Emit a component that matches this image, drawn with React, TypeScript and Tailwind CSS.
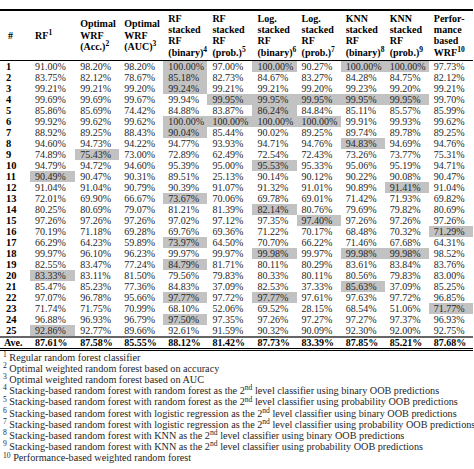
import React from "react";

// value, highlighted when the string ends with "*"
const rows: string[][] = [
  ["91.00", "98.20", "98.20", "100.00*", "97.00", "100.00*", "90.27", "100.00*", "100.00*", "97.73"],
  ["83.75", "82.12", "78.67", "85.18*", "82.73", "84.67", "83.27", "84.28", "84.75", "82.12"],
  ["99.21", "99.21", "99.20", "99.24*", "99.21", "99.21", "99.20", "99.23", "99.20", "99.21"],
  ["99.69", "99.69", "99.67", "99.94", "99.95*", "99.95*", "99.95*", "99.95*", "99.95*", "99.70"],
  ["85.86", "85.69", "74.42", "84.88", "83.87", "86.24*", "84.84", "85.11", "85.57", "85.99"],
  ["99.92", "99.62", "99.62", "100.00*", "100.00*", "100.00*", "100.00*", "99.91", "99.93", "99.62"],
  ["88.92", "89.25", "88.43", "90.04*", "85.44", "90.02", "89.25", "89.74", "89.78", "89.25"],
  ["94.60", "94.73", "94.22", "94.77", "93.93", "94.71", "94.76", "94.83*", "94.69", "94.76"],
  ["74.89", "75.43*", "73.00", "72.89", "62.49", "72.54", "72.43", "73.26", "73.77", "75.31"],
  ["94.79", "94.72", "94.60", "95.39", "95.00", "95.53*", "95.33", "95.06", "95.19", "94.71"],
  ["90.49*", "90.47", "90.31", "89.51", "25.13", "90.14", "90.12", "90.22", "90.08", "90.47"],
  ["91.04", "91.04", "90.79", "90.39", "91.07", "91.32", "91.01", "90.89", "91.41*", "91.04"],
  ["72.01", "69.90", "66.67", "73.67*", "70.06", "69.78", "69.01", "71.42", "71.93", "69.82"],
  ["80.25", "80.69", "79.07", "81.21", "81.39", "82.14*", "80.76", "79.69", "79.82", "80.69"],
  ["97.26", "97.26", "97.26", "97.02", "97.12", "97.35", "97.40*", "97.26", "97.26", "97.26"],
  ["70.19", "71.18", "69.28", "69.76", "69.36", "71.22", "70.17", "68.48", "70.32", "71.29*"],
  ["66.29", "64.23", "59.89", "73.97*", "64.50", "70.70", "66.22", "71.46", "67.68", "64.31"],
  ["99.97", "96.10", "96.23", "99.97", "99.97", "99.98*", "99.97", "99.98*", "99.98*", "98.52"],
  ["82.55", "83.47", "77.24", "84.79*", "81.71", "80.11", "80.29", "83.61", "83.84", "83.76"],
  ["83.33*", "83.11", "81.50", "79.56", "79.83", "80.33", "80.11", "80.56", "79.83", "83.00"],
  ["85.47", "85.23", "77.36", "84.83", "37.09", "82.53", "37.33", "85.63*", "37.09", "85.25"],
  ["97.07", "96.78", "95.66", "97.77*", "97.72", "97.77*", "97.61", "97.63", "97.72", "96.85"],
  ["71.74", "71.75", "70.99", "68.10", "52.06", "69.52", "28.15", "68.54", "51.06", "71.77*"],
  ["96.88", "96.93", "96.79", "97.50*", "97.35", "97.26", "97.27", "97.27", "97.37", "96.93"],
  ["92.86*", "92.77", "89.66", "92.61", "91.59", "90.32", "90.09", "92.30", "92.00", "92.75"],
];

const averages = ["87.61", "87.58", "85.55", "88.12", "81.42", "87.73", "83.39", "87.85", "85.21", "87.68"];

const headers: { lines: string[]; sup: string }[] = [
  { lines: ["RF"], sup: "1" },
  { lines: ["Optimal", "WRF", "(Acc.)"], sup: "2" },
  { lines: ["Optimal", "WRF", "(AUC)"], sup: "3" },
  { lines: ["RF", "stacked", "RF", "(binary)"], sup: "4" },
  { lines: ["RF", "stacked", "RF", "(prob.)"], sup: "5" },
  { lines: ["Log.", "stacked", "RF", "(binary)"], sup: "6" },
  { lines: ["Log.", "stacked", "RF", "(prob.)"], sup: "7" },
  { lines: ["KNN", "stacked", "RF", "(binary)"], sup: "8" },
  { lines: ["KNN", "stacked", "RF", "(prob.)"], sup: "9" },
  { lines: ["Perfor-", "mance", "based", "WRF"], sup: "10" },
];

const notes: React.ReactNode[] = [
  "Regular random forest classifier",
  "Optimal weighted random forest based on accuracy",
  "Optimal weighted random forest based on AUC",
  <>Stacking-based random forest with random forest as the 2<sup>nd</sup> level classifier using binary OOB predictions</>,
  <>Stacking-based random forest with random forest as the 2<sup>nd</sup> level classifier using probability OOB predictions</>,
  <>Stacking-based random forest with logistic regression as the 2<sup>nd</sup> level classifier using binary OOB predictions</>,
  <>Stacking-based random forest with logistic regression as the 2<sup>nd</sup> level classifier using probability OOB predictions</>,
  <>Stacking-based random forest with KNN as the 2<sup>nd</sup> level classifier using binary OOB predictions</>,
  <>Stacking-based random forest with KNN as the 2<sup>nd</sup> level classifier using probability OOB predictions</>,
  "Performance-based weighted random forest",
];

const widths = ["w-[30px]", "w-[45px]", "w-[44px]", "w-[44px]", "w-[44px]", "w-[45px]", "w-[44px]", "w-[44px]", "w-[44px]", "w-[44px]", "w-[44px]"];

export default function App() {
  return (
    <div className="w-[474px] h-[469px] overflow-hidden bg-white text-[#262626] font-['Liberation_Serif',serif]">
      <table className="mt-[9px] w-[473px] table-fixed border-collapse border-t-2 border-black">
        <colgroup>
          {widths.map((w, i) => (
            <col key={i} className={w} />
          ))}
        </colgroup>
        <thead>
          <tr className="h-[50px] border-b border-black">
            <th className="pl-[8px] text-left align-middle text-[10px] font-bold text-black">#</th>
            {headers.map((h, i) => (
              <th key={i} className="pl-[5px] text-left align-middle text-[10px] leading-[11.3px] font-bold text-black whitespace-nowrap">
                {h.lines.map((line, j) => (
                  <div key={j}>
                    {line}
                    {j === h.lines.length - 1 && <sup>{h.sup}</sup>}
                  </div>
                ))}
              </th>
            ))}
          </tr>
        </thead>
        <tbody>
          {rows.map((row, r) => (
            <tr key={r} className="h-[11px]">
              <td className="p-0 pl-[6px] text-[10.5px] leading-[11px] font-bold text-black">{r + 1}</td>
              {row.map((v, c) => {
                const hi = v.endsWith("*");
                return (
                  <td
                    key={c}
                    className={`p-0 pl-[5px] text-[10px] leading-[11px] ${hi ? "bg-[#c2c2c2]" : ""}`}
                  >
                    {v.replace("*", "")}%
                  </td>
                );
              })}
            </tr>
          ))}
          <tr className="h-[11px] border-t-2 border-[#666] border-b-[3px] border-b-black border-double">
            <td className="pl-[4px] text-[10px] leading-[10px] font-bold text-black">Ave.</td>
            {averages.map((v, i) => (
              <td key={i} className="pl-[5px] text-[10px] leading-[10px] font-bold text-black">
                {v}%
              </td>
            ))}
          </tr>
        </tbody>
      </table>
      <div className="mt-[1px] pl-[3px] text-[10.2px] leading-[11.2px]">
        {notes.map((n, i) => (
          <div key={i} className="whitespace-nowrap">
            <sup>{i + 1}</sup> {n}
          </div>
        ))}
      </div>
    </div>
  );
}
